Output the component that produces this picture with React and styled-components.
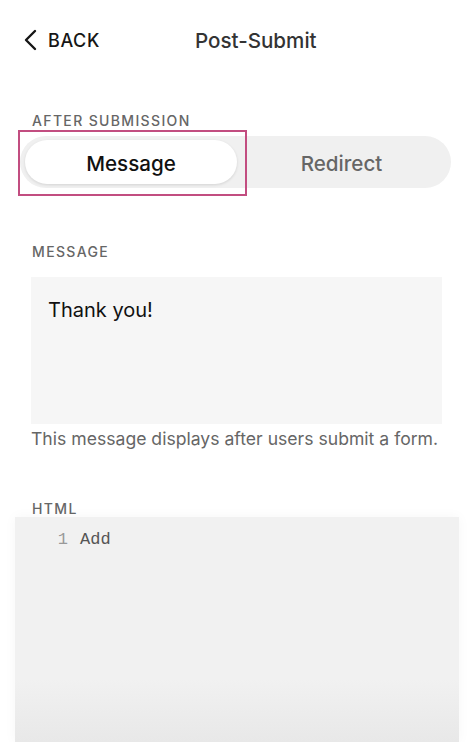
import React, { useState } from "react";
import styled, { createGlobalStyle } from "styled-components";

const Global = createGlobalStyle`
  html, body { margin: 0; padding: 0; background: #fff; }
  body { font-family: "Inter", "Liberation Sans", sans-serif; color: #111; }
  * { box-sizing: border-box; }
`;

const Page = styled.div`
  width: 474px;
  height: 742px;
  overflow: hidden;
  display: flex;
  flex-direction: column;
  background: #fff;
`;

const Header = styled.header`
  height: 80px;
  display: flex;
  align-items: center;
  padding: 0 24px 0 23px;
`;

const BackButton = styled.button`
  display: flex;
  align-items: center;
  gap: 11px;
  border: 0;
  background: none;
  padding: 0;
  font: 500 18px "Inter", "Liberation Sans", sans-serif;
  letter-spacing: 0.6px;
  color: #161616;
  cursor: pointer;
`;

const Title = styled.h1`
  margin: 0 0 0 95px;
  font: 500 20.6px "Inter", "Liberation Sans", sans-serif;
  color: #333;
`;

const Section = styled.section`
  display: flex;
  flex-direction: column;
  padding: ${(p) => p.$pad || "0 32px 0 32px"};
  margin-top: ${(p) => p.$top || 0}px;
`;

const Label = styled.div`
  font: 500 14px "Inter", "Liberation Sans", sans-serif;
  letter-spacing: 1.35px;
  color: #666;
  text-transform: uppercase;
  line-height: 16px;
  padding-left: ${(p) => p.$indent || 0}px;
`;

const SegmentWrap = styled.div`
  position: relative;
  margin: 7px 23px 0 20px;
`;

const Segment = styled.div`
  display: grid;
  grid-template-columns: 212px 1fr;
  height: 52px;
  padding: 4px 5px;
  border-radius: 26px;
  background: #f0f0f0;
`;

const SegButton = styled.button`
  border: 0;
  border-radius: 23px;
  padding: 2px 0 0;
  background: ${(p) => (p.$active ? "#fff" : "transparent")};
  box-shadow: ${(p) => (p.$active ? "0 1px 3px rgba(0,0,0,0.12)" : "none")};
  font: 500 20.6px "Inter", "Liberation Sans", sans-serif;
  color: ${(p) => (p.$active ? "#111" : "#666")};
  cursor: pointer;
`;

const FocusRing = styled.div`
  position: absolute;
  left: -2px;
  top: -6px;
  width: 229px;
  height: 66px;
  border: 2.5px solid #c24d80;
  pointer-events: none;
`;

const TextBox = styled.div`
  margin-top: 17px;
  height: 147px;
  background: #f6f6f6;
  padding: 21px 17px 17px;
  font: 400 20px "Inter", "Liberation Sans", sans-serif;
  color: #111;
  margin-left: -1px;
`;

const Help = styled.p`
  margin: 4px 0 0 -1px;
  font: 400 17.6px "Inter", "Liberation Sans", sans-serif;
  color: #666;
  white-space: nowrap;
`;

const CodeBox = styled.div`
  flex: 1;
  margin-left: 15px;
  margin-right: 15px;
  background: linear-gradient(#f1f1f1 0%, #f1f1f1 72%, #e8e8e8 100%);
  padding: 13px 0 0 0;
  display: grid;
  grid-template-columns: 53px 1fr;
  align-content: start;
  font: 400 17px "Courier New", Courier, "Nimbus Mono PS", FreeMono, "Liberation Mono", monospace;
  box-shadow: 0 0 12px rgba(0, 0, 0, 0.04);
`;

const LineNo = styled.span`
  text-align: right;
  color: #999;
`;

const Code = styled.span`
  color: #555;
  padding-left: 12px;
`;

const Chevron = () => (
  <svg width="14" height="22" viewBox="0 0 14 22" fill="none">
    <path d="M12 2 L3 11 L12 20" stroke="#161616" strokeWidth="2.4" strokeLinecap="round" strokeLinejoin="round" />
  </svg>
);

export default function App() {
  const [mode, setMode] = useState("message");
  return (
    <Page>
      <Global />
      <Header>
        <BackButton>
          <Chevron />
          BACK
        </BackButton>
        <Title>Post-Submit</Title>
      </Header>

      <Section $pad="0" $top={33}>
        <Label $indent={32}>After Submission</Label>
        <SegmentWrap>
          <Segment>
            <SegButton $active={mode === "message"} onClick={() => setMode("message")}>
              Message
            </SegButton>
            <SegButton $active={mode === "redirect"} onClick={() => setMode("redirect")}>
              Redirect
            </SegButton>
          </Segment>
          <FocusRing />
        </SegmentWrap>
      </Section>

      <Section $top={56}>
        <Label>Message</Label>
        <TextBox>Thank you!</TextBox>
        <Help>This message displays after users submit a form.</Help>
      </Section>

      <Section $top={52} $pad="0">
        <Label $indent={32}>HTML</Label>
      </Section>
      <CodeBox>
        <LineNo>1</LineNo>
        <Code>Add</Code>
      </CodeBox>
    </Page>
  );
}
